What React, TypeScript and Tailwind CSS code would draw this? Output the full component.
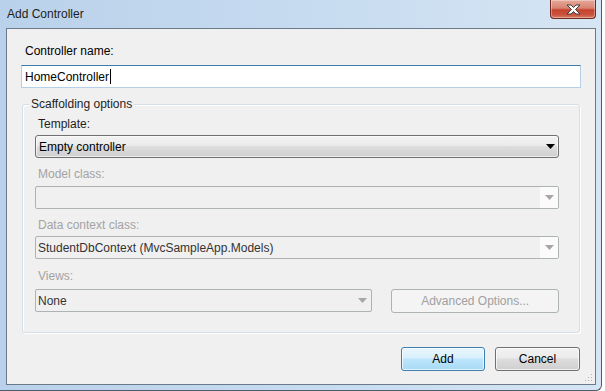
import React from "react";

const FONT = { fontFamily: '"Segoe UI", "Liberation Sans", Arial, sans-serif' };

function Arrow({ disabled = false }: { disabled?: boolean }) {
  return (
    <svg width="9" height="5" viewBox="0 0 9 5" className="shrink-0">
      <path d="M0 0h9L4.5 5z" fill={disabled ? "#a6a6a6" : "#000"} />
    </svg>
  );
}

function Label({ text, disabled = false, className = "" }: { text: string; disabled?: boolean; className?: string }) {
  return (
    <div className={`h-[16px] leading-[16px] pl-[3px] text-[12px] ${disabled ? "text-[#a3a3a3]" : "text-[#1e1e1e]"} ${className}`}>
      {text}
    </div>
  );
}

function DisabledCombo({ value = "", className = "", split = true }: { value?: string; className?: string; split?: boolean }) {
  return (
    <div className={`flex h-[23px] border border-[#adb2b5] rounded-[2px] bg-[#f0f0f0] ${className}`}>
      <div className="flex-1 flex items-center pl-[2px] text-[12px] text-[#333]">{value}</div>
      <div className={`w-[18px] flex items-center justify-center ${split ? "bg-[#fbfbfb]" : ""}`}>
        <Arrow disabled />
      </div>
    </div>
  );
}

function CloseButton() {
  return (
    <div className="w-[46px] h-[19px] rounded-b-[4px] border border-t-0 border-[#6d2a21] flex items-center justify-center bg-[linear-gradient(to_bottom,#e6a898_0%,#d88472_45%,#c5432e_55%,#c9513c_80%,#d97a60_100%)] shadow-[inset_0_0_0_1px_rgba(255,255,255,0.35)]">
      <svg width="15" height="11" viewBox="0 0 15 11">
        <path
          d="M1 1h4l2.5 2.5L10 1h4l-4.5 4.5L14 10h-4L7.5 7.5 5 10H1l4.5-4.5z"
          fill="#ffffff"
          stroke="#3c3c3c"
          strokeWidth="1"
          strokeLinejoin="round"
        />
      </svg>
    </div>
  );
}

export default function App() {
  return (
    <div className="w-[605px] h-[391px] bg-white overflow-hidden" style={FONT}>
      <div className="w-[602px] h-[391px] flex flex-col bg-[linear-gradient(to_right,#b9d1ea,#c9ddf1_60%,#d6e5f3)] border-r border-b border-[#4d5c6c] rounded-br-[6px]">
        {/* title bar */}
        <div className="h-[28px] flex items-start shrink-0">
          <div className="pl-[7px] pt-[6px] text-[12px] leading-[16px] text-[#1e1e1e]">Add Controller</div>
          <div className="ml-auto mr-[5px]">
            <CloseButton />
          </div>
        </div>

        {/* client area */}
        <div className="ml-[6px] w-[590px] h-[357px] border border-[#6b7a8a] bg-[#f0f0f0] flex flex-col px-[14px] relative">
          <Label text="Controller name:" className="mt-[14px] pl-[4px] text-black" />
          <div className="mt-[6px] h-[23px] border border-[#b5cfe7] border-t-[#3d7bad] bg-white flex items-center pl-[3px] text-[12px] text-black">
            HomeController
            <span className="inline-block w-px h-[15px] bg-black ml-px" />
          </div>

          {/* group box */}
          <div className="relative mt-[16px] ml-px mr-[1px] h-[229px] border border-[#d5dfe5] rounded-[3px] shadow-[inset_1px_1px_0_#fff,1px_1px_0_#fff] pt-[11px] pl-[12px] pr-[20px]">
            <div className="absolute -top-[9px] left-[6px] px-[2px] bg-[#f0f0f0] text-[12px] leading-[16px] text-[#1e1e1e]">
              Scaffolding options
            </div>

            <Label text="Template:" />
            <div className="mt-[3px] h-[23px] border border-[#707070] rounded-[3px] flex items-center pl-[3px] pr-[3px] text-[12px] text-black bg-[linear-gradient(to_bottom,#f2f2f2_0%,#ebebeb_45%,#dddddd_50%,#cfcfcf_100%)] shadow-[inset_0_0_0_1px_rgba(255,255,255,0.6)]">
              <span className="flex-1">Empty controller</span>
              <Arrow />
            </div>

            <Label text="Model class:" disabled className="mt-[8px]" />
            <DisabledCombo className="mt-[4px]" />

            <Label text="Data context class:" disabled className="mt-[8px]" />
            <DisabledCombo className="mt-[3px]" value="StudentDbContext (MvcSampleApp.Models)" />

            <Label text="Views:" disabled className="mt-[9px]" />
            <div className="mt-[5px] flex items-start">
              <DisabledCombo className="w-[338px]" value="None" split={false} />
              <div className="ml-[19px] w-[168px] h-[24px] border border-[#adb2b5] rounded-[3px] bg-[#f4f4f4] flex items-center justify-center text-[12px] text-[#a0a0a0]">
                Advanced Options...
              </div>
            </div>
          </div>

          {/* buttons */}
          <div className="mt-[14px] flex justify-end gap-[10px] pr-[1px]">
            <div className="w-[84px] h-[24px] border border-[#3c7fb1] rounded-[3px] flex items-center justify-center text-[12px] text-black bg-[linear-gradient(to_bottom,#eaf6fd_0%,#d9f0fc_45%,#bee6fd_50%,#a7d9f5_100%)] shadow-[inset_0_0_0_1px_rgba(255,255,255,0.7)]">
              Add
            </div>
            <div className="w-[85px] h-[24px] border border-[#707070] rounded-[3px] flex items-center justify-center text-[12px] text-black bg-[linear-gradient(to_bottom,#f2f2f2_0%,#ebebeb_45%,#dddddd_50%,#cfcfcf_100%)] shadow-[inset_0_0_0_1px_rgba(255,255,255,0.7)]">
              Cancel
            </div>
          </div>

          {/* size grip */}
          <svg className="absolute right-[2px] bottom-[2px]" width="10" height="10" viewBox="0 0 10 10">
            {[
              [8, 2],
              [8, 5],
              [5, 5],
              [8, 8],
              [5, 8],
              [2, 8],
            ].map(([x, y], i) => (
              <rect key={i} x={x} y={y} width="1" height="1" fill="#b0b4b8" />
            ))}
          </svg>
        </div>
      </div>
    </div>
  );
}
